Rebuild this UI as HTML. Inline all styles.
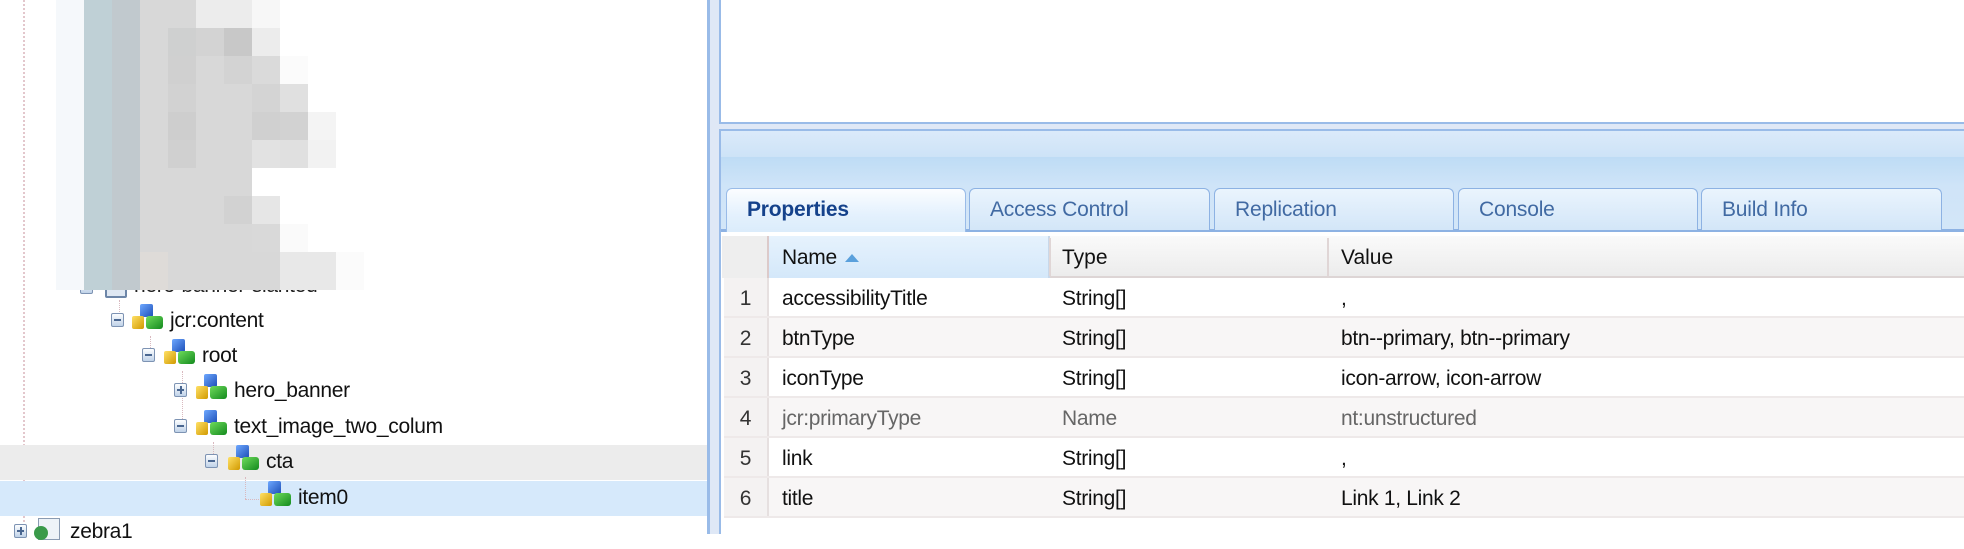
<!DOCTYPE html>
<html><head><meta charset="utf-8"><style>
*{margin:0;padding:0;box-sizing:border-box}
body{width:1964px;height:534px;overflow:hidden;background:#fff;font-family:"Liberation Sans",Arial,sans-serif;position:relative}
.abs{position:absolute}
.blk{position:absolute;width:28px;height:28px}
.tr{position:absolute;left:0;width:709px;height:35px}
.tt{position:absolute;font-size:21px;color:#111;line-height:35px;letter-spacing:-0.3px}
.tg{position:absolute;width:13px;height:14px;border:1px solid #7d93b3;border-radius:2px;background:linear-gradient(#fdfeff,#c0d2e8)}
.tg:after{content:"";position:absolute;left:2px;right:2px;top:5px;height:2px;background:#4a6791}
.tg.p:before{content:"";position:absolute;top:2px;bottom:2px;left:5px;width:2px;background:#4a6791}
.ic{position:absolute;width:32px;height:26px}
.vd{position:absolute;border-left:1px dotted #d9b9bf}
.hd{position:absolute;border-top:1px dotted #d9b9bf}
.tab{position:absolute;top:188px;height:42px;border:1px solid #8db2e3;border-bottom:none;border-radius:6px 6px 0 0;background:linear-gradient(#eaf4fd,#d3e6f8);font-size:21px;color:#416aa3;padding:9px 0 0 20px;letter-spacing:-0.2px}
.row{position:absolute;left:724px;width:1240px;height:40px;border-bottom:2px solid #eee9e9;font-size:21px;color:#111;letter-spacing:-0.3px}
.row span{position:absolute;top:9px}
.row .n{left:0;width:45px;height:38px;top:0;background:#f4f2f2;border-right:2px solid #e6e0e0;text-align:center;padding-top:9px;color:#333}
.row .a{left:58px}.row .b{left:338px}.row .c{left:617px}
.alt{background:#f8f6f6}
</style></head><body>
<svg width="0" height="0" style="position:absolute"><defs>
<linearGradient id="gb" x1="0" y1="0" x2="1" y2="1"><stop offset="0" stop-color="#6ea8ff"/><stop offset="1" stop-color="#1d4fb8"/></linearGradient>
<linearGradient id="gy" x1="0" y1="0" x2="1" y2="1"><stop offset="0" stop-color="#ffe066"/><stop offset="1" stop-color="#d19a00"/></linearGradient>
<linearGradient id="gg" x1="0" y1="0" x2="1" y2="1"><stop offset="0" stop-color="#6fdc5c"/><stop offset="1" stop-color="#138a1e"/></linearGradient>
<g id="cube"><rect x="8" y="0" width="13" height="13" rx="2" fill="url(#gb)"/><rect x="0" y="12" width="12" height="13" rx="2" fill="url(#gy)"/><rect x="14" y="12" width="17" height="13" rx="3" fill="url(#gg)"/></g>
</defs></svg>
<!-- left pane -->
<div class="vd" style="left:23px;top:0;height:534px;border-left:2px dotted #e3c7cc"></div>
<div class="tr" style="top:445px;background:#ececec"></div>
<div class="tr" style="top:481px;background:#d6e9fb"></div>

<!-- connectors -->
<div class="vd" style="left:119px;top:300px;height:12px"></div>
<div class="vd" style="left:150px;top:336px;height:12px"></div>
<div class="vd" style="left:182px;top:371px;height:50px"></div>
<div class="vd" style="left:213px;top:442px;height:12px"></div>
<div class="vd" style="left:245px;top:477px;height:22px"></div>
<div class="hd" style="left:245px;top:499px;width:14px"></div>

<!-- hero-banner-slanted (partially hidden) -->
<div class="tg" style="left:80px;top:280px"></div>
<div class="abs" style="left:105px;top:278px;width:22px;height:20px;border:2px solid #6d86a8;background:#dfe8f3;border-radius:2px"></div>
<div class="tt" style="left:134px;top:268px;color:#222">hero-banner-slanted</div>

<!-- tree rows -->
<div class="tg" style="left:111px;top:313px"></div>
<svg class="ic" style="left:132px;top:304px" viewBox="0 0 32 26"><use href="#cube"/></svg>
<div class="tt" style="left:170px;top:303px">jcr:content</div>

<div class="tg" style="left:142px;top:348px"></div>
<svg class="ic" style="left:164px;top:339px" viewBox="0 0 32 26"><use href="#cube"/></svg>
<div class="tt" style="left:202px;top:338px">root</div>

<div class="tg p" style="left:174px;top:383px"></div>
<svg class="ic" style="left:196px;top:374px" viewBox="0 0 32 26"><use href="#cube"/></svg>
<div class="tt" style="left:234px;top:373px">hero_banner</div>

<div class="tg" style="left:174px;top:419px"></div>
<svg class="ic" style="left:196px;top:410px" viewBox="0 0 32 26"><use href="#cube"/></svg>
<div class="tt" style="left:234px;top:409px">text_image_two_colum</div>

<div class="tg" style="left:205px;top:454px"></div>
<svg class="ic" style="left:228px;top:445px" viewBox="0 0 32 26"><use href="#cube"/></svg>
<div class="tt" style="left:266px;top:444px">cta</div>

<svg class="ic" style="left:260px;top:481px" viewBox="0 0 32 26"><use href="#cube"/></svg>
<div class="tt" style="left:298px;top:480px">item0</div>

<div class="tg p" style="left:14px;top:524px"></div>
<div class="abs" style="left:38px;top:518px;width:22px;height:22px;border:1px solid #8a9bb2;background:#eef3f8"></div>
<div class="abs" style="left:34px;top:526px;width:14px;height:14px;border-radius:50%;background:#3a9a4a"></div>
<div class="tt" style="left:70px;top:514px">zebra1</div>

<!-- blur grid -->
<div class="abs" style="left:56px;top:0;width:28px;height:290px;background:#f5f8fb"></div>
<div class="abs" style="left:84px;top:0;width:28px;height:290px;background:#bfd0d6"></div>
<div class="abs" style="left:112px;top:0;width:28px;height:290px;background:#c1c9ce"></div>
<div class="abs" style="left:140px;top:0;width:112px;height:290px;background:#d8d8d8"></div>
<div class="blk" style="left:196px;top:0;background:#ececec"></div><div class="blk" style="left:224px;top:0;background:#ececec"></div><div class="blk" style="left:252px;top:0;background:#f7f7f7"></div>
<div class="blk" style="left:168px;top:28px;background:#cfd0d0"></div><div class="blk" style="left:196px;top:28px;background:#d3d3d3"></div><div class="blk" style="left:224px;top:28px;background:#c8c8c8"></div><div class="blk" style="left:252px;top:28px;background:#ececec"></div>
<div class="blk" style="left:168px;top:56px;background:#d0d0d0"></div><div class="blk" style="left:224px;top:56px;background:#d3d3d3"></div><div class="blk" style="left:252px;top:56px;background:#dadada"></div><div class="blk" style="left:280px;top:56px;background:#fbfbfb"></div>
<div class="blk" style="left:168px;top:84px;background:#d2d2d2"></div><div class="blk" style="left:252px;top:84px;background:#d4d4d4"></div><div class="blk" style="left:280px;top:84px;background:#e0e0e0"></div>
<div class="blk" style="left:168px;top:112px;background:#cecece"></div><div class="blk" style="left:252px;top:112px;background:#d0d0d0"></div><div class="blk" style="left:280px;top:112px;background:#d2d2d2"></div><div class="blk" style="left:308px;top:112px;background:#f4f4f4"></div>
<div class="blk" style="left:168px;top:140px;background:#d0d0d0"></div><div class="blk" style="left:252px;top:140px;background:#e2e2e2"></div><div class="blk" style="left:280px;top:140px;background:#e0e0e0"></div><div class="blk" style="left:308px;top:140px;background:#f2f2f2"></div>
<div class="blk" style="left:252px;top:168px;background:#fff"></div>
<div class="blk" style="left:224px;top:196px;background:#d2d2d2"></div><div class="blk" style="left:252px;top:196px;background:#e6e6e6"></div>
<div class="blk" style="left:252px;top:224px;background:#d9d9d9"></div><div class="blk" style="left:280px;top:224px;background:#fafafa"></div>
<div class="blk" style="left:140px;top:252px;height:38px;background:#dedbd8"></div><div class="blk" style="left:252px;top:252px;height:38px;background:#d8d8d8"></div><div class="blk" style="left:280px;top:252px;height:38px;background:#e8e8e8"></div><div class="blk" style="left:308px;top:252px;height:38px;background:#e8e8e8"></div><div class="blk" style="left:336px;top:252px;height:38px;background:#fbfbfb"></div>

<!-- right side -->
<div class="abs" style="left:707px;top:0;width:14px;height:534px;background:#dfe8f6;border-left:3px solid #99bbe8"></div>
<div class="abs" style="left:719px;top:0;width:1245px;height:124px;background:#fff;border:2px solid #99bbe8;border-top:none;border-right:none"></div>
<div class="abs" style="left:719px;top:124px;width:1245px;height:5px;background:#dfe8f6"></div>
<div class="abs" style="left:719px;top:129px;width:1245px;height:405px;background:#fff;border-left:2px solid #99bbe8;border-top:2px solid #99bbe8"></div>
<div class="abs" style="left:721px;top:131px;width:1243px;height:26px;background:linear-gradient(#dbeafa,#cde3f7)"></div>
<div class="abs" style="left:721px;top:157px;width:1243px;height:73px;background:linear-gradient(#bedcf5,#cfe4f8 40%,#d3e6f8)"></div>
<div class="abs" style="left:721px;top:229px;width:1243px;height:3px;background:#8db2e3"></div>

<div class="tab" style="left:726px;width:240px;height:44px;background:linear-gradient(#fbfdff,#e4f1fd 60%,#dbecfb);border-color:#99bbe8;color:#15428b;font-weight:bold;z-index:2">Properties</div>
<div class="tab" style="left:969px;width:241px">Access Control</div>
<div class="tab" style="left:1214px;width:240px">Replication</div>
<div class="tab" style="left:1458px;width:240px">Console</div>
<div class="tab" style="left:1701px;width:241px">Build Info</div>

<!-- table header -->
<div class="abs" style="left:722px;top:236px;width:1242px;height:42px;background:linear-gradient(#fafafa,#ececec);border-bottom:2px solid #ddd5d5"></div>
<div class="abs" style="left:722px;top:236px;width:47px;height:42px;background:#eeeeee;border-right:2px solid #dccaca"></div>
<div class="abs" style="left:769px;top:236px;width:281px;height:42px;background:linear-gradient(#e6f2fd,#d4e8fa);border-right:2px solid #c8d8ea"></div>
<div class="abs" style="left:1049px;top:238px;width:2px;height:38px;background:#e0d6d6"></div>
<div class="abs" style="left:1327px;top:238px;width:2px;height:38px;background:#e0d6d6"></div>
<div class="abs" style="left:782px;top:246px;font-size:21px;letter-spacing:-0.3px;color:#111">Name <span style="display:inline-block;width:0;height:0;border-left:7px solid transparent;border-right:7px solid transparent;border-bottom:8px solid #5aa0dc;margin-left:3px;vertical-align:2px"></span></div>
<div class="abs" style="left:1062px;top:246px;font-size:21px;color:#111">Type</div>
<div class="abs" style="left:1341px;top:246px;font-size:21px;color:#111">Value</div>

<div class="row" style="top:278px"><span class="n">1</span><span class="a">accessibilityTitle</span><span class="b">String[]</span><span class="c">,</span></div>
<div class="row alt" style="top:318px"><span class="n">2</span><span class="a">btnType</span><span class="b">String[]</span><span class="c">btn--primary, btn--primary</span></div>
<div class="row" style="top:358px"><span class="n">3</span><span class="a">iconType</span><span class="b">String[]</span><span class="c">icon-arrow, icon-arrow</span></div>
<div class="row alt" style="top:398px;color:#666"><span class="n">4</span><span class="a">jcr:primaryType</span><span class="b">Name</span><span class="c">nt:unstructured</span></div>
<div class="row" style="top:438px"><span class="n">5</span><span class="a">link</span><span class="b">String[]</span><span class="c">,</span></div>
<div class="row alt" style="top:478px"><span class="n">6</span><span class="a">title</span><span class="b">String[]</span><span class="c">Link 1, Link 2</span></div>
</body></html>
